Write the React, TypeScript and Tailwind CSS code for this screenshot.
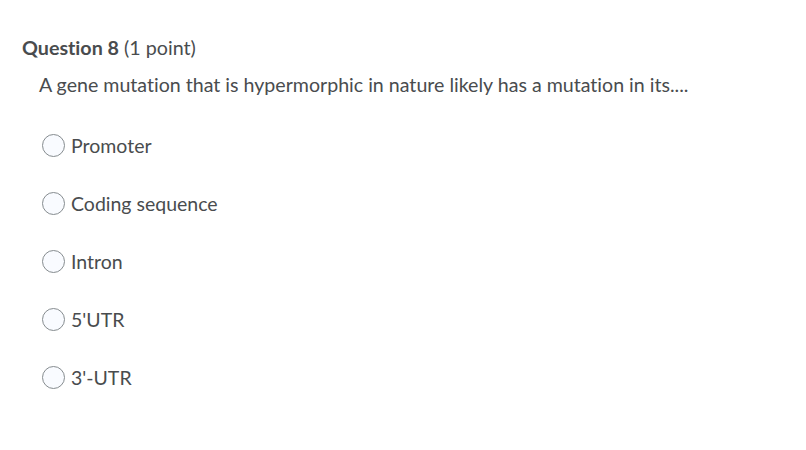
export default function App() {
  const options = ["Promoter", "Coding sequence", "Intron", "5'UTR", "3'-UTR"];

  return (
    <div className="w-[806px] h-[450px] bg-white text-[#494c4e] font-['Lato',sans-serif] [font-variant-ligatures:none] overflow-hidden">
      <div className="pt-[36px] pl-[22px]">
        <h2 className="text-[19.7px] leading-[24px]">
          <span className="font-bold">Question 8</span> (1 point)
        </h2>
        <p className="mt-[12px] ml-[17px] text-[19.6px] leading-[26px]">
          A gene mutation that is hypermorphic in nature likely has a mutation in its....
        </p>
        <div className="mt-[36px] ml-[20px] flex flex-col gap-[35px]">
          {options.map((opt) => (
            <label key={opt} className="flex items-center gap-[6px] h-[23px]">
              <span className="w-[23px] h-[23px] rounded-full border border-[#868c8f] bg-[#f9fbff] shrink-0" />
              <span className="text-[19.5px] leading-[23px]">{opt}</span>
            </label>
          ))}
        </div>
      </div>
    </div>
  );
}
